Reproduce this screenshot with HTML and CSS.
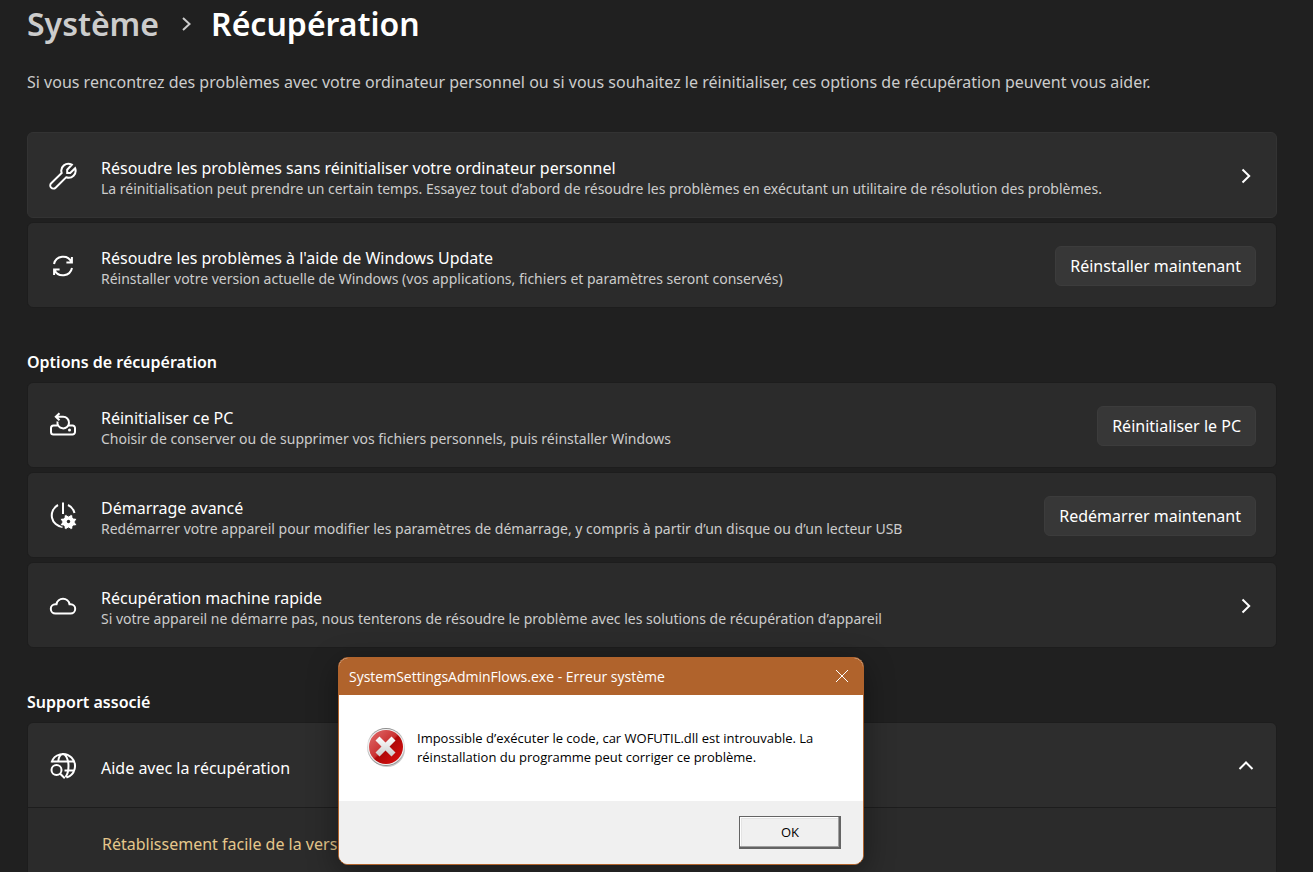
FILE: index.html
```html
<!DOCTYPE html>
<html lang="fr">
<head>
<meta charset="utf-8">
<meta name="viewport" content="width=device-width, initial-scale=1">
<title>Système – Récupération</title>
<link rel="stylesheet" href="styles.css">
</head>
<body>
<main class="page">
  <nav class="breadcrumb" aria-label="Fil d’Ariane">
    <a class="crumb" href="#systeme">Système</a>
    <svg class="crumb-sep" viewBox="0 0 12 16" aria-hidden="true"><path d="M2 2l6.500 6L2 14"/></svg>
    <h1 class="crumb-current">Récupération</h1>
  </nav>
  <p class="intro">Si vous rencontrez des problèmes avec votre ordinateur personnel ou si vous souhaitez le réinitialiser, ces options de récupération peuvent vous aider.</p>

  <section class="cards">
    <button class="card card-link" type="button">
      <svg class="icon" viewBox="0 0 28 28" aria-hidden="true"><path d="M22.800 2.700A7 7 0 0 0 12.700 11L2.200 21.200a3 3 0 0 0 4.400 4.500L17.100 15.300A7 7 0 0 0 26.100 6.200L21.200 10.900H18.200V7.700L22.800 2.700z"/></svg>
      <span class="card-text"><span class="card-title">Résoudre les problèmes sans réinitialiser votre ordinateur personnel</span><span class="card-desc">La réinitialisation peut prendre un certain temps. Essayez tout d’abord de résoudre les problèmes en exécutant un utilitaire de résolution des problèmes.</span></span>
      <svg class="chevron" viewBox="0 0 20 20" aria-hidden="true"><path d="M6.500 3.500L13.200 10l-6.700 6.500"/></svg>
    </button>
    <div class="card">
      <svg class="icon" viewBox="0 0 28 28" aria-hidden="true"><path d="M5 12a9.300 9.300 0 0 1 17.500-2M22.900 5v5.500h-5.500M23 16a9.300 9.300 0 0 1-17.500 2M5.100 23v-5.500h5.500"/></svg>
      <div class="card-text"><h3 class="card-title">Résoudre les problèmes à l'aide de Windows Update</h3><p class="card-desc">Réinstaller votre version actuelle de Windows (vos applications, fichiers et paramètres seront conservés)</p></div>
      <button class="button" type="button">Réinstaller maintenant</button>
    </div>
  </section>

  <h2 class="section-title">Options de récupération</h2>
  <section class="cards">
    <div class="card">
      <svg class="icon" viewBox="0 0 28 28" aria-hidden="true"><path d="M8.500 13.500H4.500a2.500 2.500 0 0 0-2.500 2.500V20a2.500 2.500 0 0 0 2.500 2.500h19a2.500 2.500 0 0 0 2.500-2.500v-4a2.500 2.500 0 0 0-2.500-2.500h-4M8.500 9.500a5.800 5.800 0 1 0 5.500-4.700H7M10.500 1.200L6.800 4.800l3.700 3.500"/><circle class="fill" cx="20.500" cy="18" r="1.500"/></svg>
      <div class="card-text"><h3 class="card-title">Réinitialiser ce PC</h3><p class="card-desc">Choisir de conserver ou de supprimer vos fichiers personnels, puis réinstaller Windows</p></div>
      <button class="button" type="button">Réinitialiser le PC</button>
    </div>
    <div class="card">
      <svg class="icon" viewBox="0 0 28 28" aria-hidden="true"><path d="M9 3A11.700 11.700 0 0 0 13.500 25M14 .500v11.500M19 3a11.700 11.700 0 0 1 6.500 8"/><path class="gear" d="M17 12.500l2.500 1.600 2.500-1.600 1.700.7.300 2.800 3 .2.500 1.500-1.600 2.300 1.600 2.300-.5 1.500-3 .2-.3 2.800-1.700.7-2.500-1.600-2.500 1.600-1.700-.7-.3-2.800-3-.2-.5-1.500 1.600-2.300-1.600-2.300.5-1.500 3-.2.300-2.800z"/><circle class="hole" cx="19.500" cy="19.500" r="1.700"/></svg>
      <div class="card-text"><h3 class="card-title">Démarrage avancé</h3><p class="card-desc">Redémarrer votre appareil pour modifier les paramètres de démarrage, y compris à partir d’un disque ou d’un lecteur USB</p></div>
      <button class="button" type="button">Redémarrer maintenant</button>
    </div>
    <button class="card" type="button">
      <svg class="icon" viewBox="0 0 28 28" aria-hidden="true"><path d="M6.500 21.500H21.500a4.600 4.600 0 0 0 .2-9.200h-1.200a6.600 6.600 0 0 0-13 0h-1.200a4.600 4.600 0 0 0 .2 9.200z"/></svg>
      <span class="card-text"><span class="card-title">Récupération machine rapide</span><span class="card-desc">Si votre appareil ne démarre pas, nous tenterons de résoudre le problème avec les solutions de récupération d’appareil</span></span>
      <svg class="chevron" viewBox="0 0 20 20" aria-hidden="true"><path d="M6.500 3.500L13.200 10l-6.700 6.500"/></svg>
    </button>
  </section>

  <h2 class="section-title">Support associé</h2>
  <section class="expander">
    <button class="card expander-head" type="button" aria-expanded="true">
      <svg class="icon globe" viewBox="0 0 28 28" aria-hidden="true"><path d="M2.500 10.500A12 12 0 1 1 17.500 25.500M3.500 9.500h21M15.500 18.500h9.500M9 10.500C9.500 5.500 11.500 2 14 2s5.500 5 5.500 12c0 5-1 8.500-3 11"/><circle cx="7.500" cy="18" r="5"/><path d="M11.200 21.700l4.600 4.600"/></svg>
      <span class="card-text"><span class="card-title">Aide avec la récupération</span></span>
      <svg class="chevron" viewBox="0 0 20 20" aria-hidden="true"><path d="M3.500 13L10 6.500l6.500 6.500"/></svg>
    </button>
    <div class="expander-body"><a class="help-link" href="#aide">Rétablissement facile de la version</a></div>
  </section>
</main>

<div class="dialog" role="alertdialog" aria-labelledby="dialog-title" aria-describedby="dialog-message">
  <header class="dialog-bar">
    <h2 class="dialog-title" id="dialog-title">SystemSettingsAdminFlows.exe - Erreur système</h2>
    <button class="dialog-close" type="button" aria-label="Fermer"><svg viewBox="0 0 14 14" aria-hidden="true"><path d="M1 1l12 12M13 1L1 13"/></svg></button>
  </header>
  <div class="dialog-body">
    <svg class="error-icon" viewBox="0 0 40 40" aria-hidden="true">
      <defs>
        <linearGradient id="rim" x1="0" y1="0" x2="0" y2="1"><stop offset="0" stop-color="#8a8a8a"/><stop offset=".4" stop-color="#e8e8e8"/><stop offset="1" stop-color="#8c8c8c"/></linearGradient>
        <linearGradient id="red" x1="0" y1="0" x2="1" y2="1"><stop offset="0" stop-color="#e27070"/><stop offset=".48" stop-color="#c93030"/><stop offset=".52" stop-color="#ad0808"/><stop offset="1" stop-color="#e01010"/></linearGradient>
        <linearGradient id="cross" x1="0" y1="0" x2="0" y2="1"><stop offset="0" stop-color="#fff"/><stop offset="1" stop-color="#ccc"/></linearGradient>
      </defs>
      <ellipse cx="21" cy="21" rx="18" ry="18" fill="#000" opacity=".2"/>
      <circle cx="20" cy="19" r="19" fill="url(#rim)"/>
      <circle cx="20" cy="19" r="18" fill="#f2f2f2"/>
      <circle cx="20" cy="19" r="17" fill="url(#red)"/>
      <path fill="url(#cross)" d="M13.500 8.500L19.500 14.500 25.500 8.500 29.500 12.500 23.500 18.500 29.500 24.500 25.500 28.500 19.500 22.500 13.500 28.500 9.500 24.500 15.500 18.500 9.500 12.500z"/>
    </svg>
    <p class="dialog-message" id="dialog-message">Impossible d’exécuter le code, car WOFUTIL.dll est introuvable. La réinstallation du programme peut corriger ce problème.</p>
  </div>
  <footer class="dialog-footer"><button class="ok" type="button">OK</button></footer>
</div>
</body>
</html>
```
FILE: styles.css
```css
* {
  box-sizing: border-box;
}

body {
  margin: 0;
  height: 100vh;
  overflow: hidden;
  background: #202020;
  color: #fff;
  font-family: "Noto Sans", "Open Sans", sans-serif;
  font-size: 16px;
  line-height: 24px;
}

h1, h2, h3, p {
  margin: 0;
  font-weight: 400;
}

button {
  font: inherit;
  color: inherit;
}

svg {
  flex: none;
  fill: none;
  stroke: #fff;
}

.page {
  padding: 0 36px 0 27px;
}

.breadcrumb {
  display: flex;
  align-items: center;
  height: 48px;
  font-size: 32px;
  line-height: 46px;
  font-weight: 600;
}

.crumb {
  color: #ccc;
  text-decoration: none;
}

.crumb-sep {
  width: 12px;
  height: 16px;
  margin: 0 18px 0 22px;
  stroke: #ccc;
  stroke-width: 2;
}

.crumb-current {
  font-size: 32px;
  font-weight: 600;
}

.intro {
  margin: 22px 0 38px;
  color: #ccc;
}

.cards {
  display: flex;
  flex-direction: column;
  gap: 4px;
}

.card {
  display: flex;
  align-items: center;
  width: 100%;
  min-height: 86px;
  padding: 2px 20px 0 21px;
  border: 1px solid #1d1d1d;
  border-radius: 6px;
  background: #2b2b2b;
  text-align: left;
}

.card-link {
  background: #2d2d2d;
  border-color: #333;
}

.icon {
  width: 28px;
  height: 28px;
  margin-right: 24px;
  stroke-width: 2;
}

.icon .fill {
  fill: #fff;
  stroke: none;
}

.icon .gear {
  fill: #fff;
  stroke: #2b2b2b;
  stroke-width: 1;
}

.icon .hole {
  fill: #2b2b2b;
  stroke: none;
}

.card-text {
  display: flex;
  flex: 1;
  flex-direction: column;
  padding-top: 4px;
}

.card-title {
  font-size: 16px;
  line-height: 22px;
}

.card-desc {
  color: #ccc;
  font-size: 14px;
  line-height: 20px;
}

.chevron {
  width: 20px;
  height: 20px;
  stroke-width: 2;
}

.button {
  height: 40px;
  padding: 0 14px;
  border: 1px solid #3c3c3c;
  border-radius: 6px;
  background: #373737;
  white-space: nowrap;
}

.section-title {
  margin: 42px 0 8px;
  font-size: 16px;
  line-height: 24px;
  font-weight: 600;
}

.expander-head {
  background: #2d2d2d;
  border-radius: 6px 6px 0 0;
}

.expander-body {
  padding: 24px 74px;
  border: 1px solid #1d1d1d;
  border-top: 0;
  background: #2b2b2b;
}

.help-link {
  color: #e5c78b;
  text-decoration: none;
}

.dialog {
  position: absolute;
  top: 657px;
  left: 338px;
  width: 526px;
  overflow: hidden;
  border: 1px solid #b0632c;
  border-radius: 10px;
  background: #fff;
  color: #000;
  font-family: "Open Sans", "Noto Sans", sans-serif;
  box-shadow: 0 8px 30px rgba(0, 0, 0, .4);
}

.dialog-bar {
  display: flex;
  align-items: center;
  justify-content: space-between;
  height: 37px;
  padding: 0 14px 0 10px;
  background: #b0632c;
  color: #fff;
}

.dialog-title {
  font-size: 14px;
  line-height: 20px;
}

.dialog-close {
  display: flex;
  padding: 0 0 2px;
  border: 0;
  background: none;
}

.dialog-close svg {
  width: 14px;
  height: 14px;
}

.dialog-body {
  display: flex;
  align-items: center;
  gap: 11px;
  height: 106px;
  padding: 0 32px 0 27px;
}

.error-icon {
  width: 40px;
  height: 40px;
  stroke: none;
}

.dialog-message {
  font-size: 13px;
  line-height: 19px;
}

.dialog-footer {
  display: flex;
  justify-content: flex-end;
  padding: 15px 22px;
  background: #f0f0f0;
}

.ok {
  width: 102px;
  height: 33px;
  padding: 0 0 2px;
  border: 1px solid #646464;
  background: #f0f0f0;
  box-shadow: inset -1px -1px #646464, inset -2px -2px #a0a0a0, inset 1px 1px #fff, inset 2px 2px #e3e3e3;
  font-size: 13px;
}
```
